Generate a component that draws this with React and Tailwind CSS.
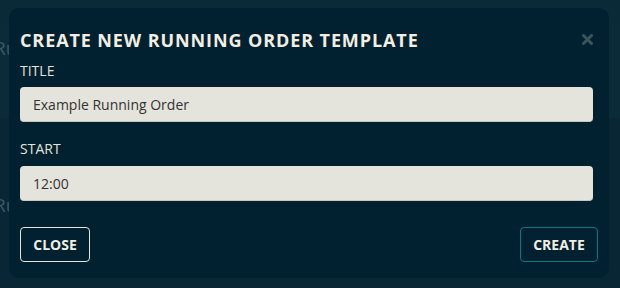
import React from 'react';

const App = () => {
  return (
    <div className="relative w-[620px] h-[288px] overflow-hidden bg-[#0a2a38] font-['Open_Sans',sans-serif]">
      {/* Faded page behind the dialog */}
      <div className="flex flex-col pt-[25px]">
        <div className="h-[93px] bg-[#0c2b39] pt-[10px] text-[19px] leading-[26px] text-[#3b5864] -ml-[6px]">Running Order</div>
        <div className="h-[170px] bg-[#092634] pt-[74px] text-[19px] leading-[26px] text-[#3b5864] -ml-[6px]">Running Order</div>
      </div>

      {/* Dialog */}
      <div className="absolute left-[9px] top-[8px] w-[600px] h-[270px] rounded-[10px] bg-[#012030] px-[11px] pt-[18px]">
        <div className="flex items-start justify-between">
          <h2 className="text-[18px] leading-[28px] font-bold tracking-[0.9px] text-[#f2eee2]">
            CREATE NEW RUNNING ORDER TEMPLATE
          </h2>
          <button className="mt-[8px] mr-[5px] text-[#3a535e]">
            <svg width="11" height="11" viewBox="0 0 11 11">
              <path d="M1.5 1.5 L9.5 9.5 M9.5 1.5 L1.5 9.5" stroke="currentColor" strokeWidth="3" strokeLinecap="round" />
            </svg>
          </button>
        </div>

        <div className="mt-[7px] flex flex-col">
          <label className="text-[14px] leading-[20px] text-[#e6e3d9]">TITLE</label>
          <div className="mt-[6px] mr-[5px] h-[35px] rounded-[4px] bg-[#e5e4dc] border-b border-[#c9c8c0] px-[13px] flex items-center text-[14px] text-[#333333]">
            Example Running Order
          </div>

          <label className="mt-[17px] text-[14px] leading-[20px] text-[#e6e3d9]">START</label>
          <div className="mt-[7px] mr-[5px] h-[35px] rounded-[4px] bg-[#e5e4dc] border-b border-[#c9c8c0] px-[13px] flex items-center text-[14px] text-[#333333]">
            12:00
          </div>
        </div>

        <div className="mt-[26px] flex items-center justify-between">
          <button className="h-[35px] w-[70px] rounded-[4px] border border-[#e8e4d8] text-[14px] font-bold text-[#f2eee2]">
            CLOSE
          </button>
          <button className="h-[35px] w-[78px] rounded-[4px] border border-[#10777f] text-[14px] font-bold text-[#f2eee2]">
            CREATE
          </button>
        </div>
      </div>
    </div>
  );
};

export default App;
